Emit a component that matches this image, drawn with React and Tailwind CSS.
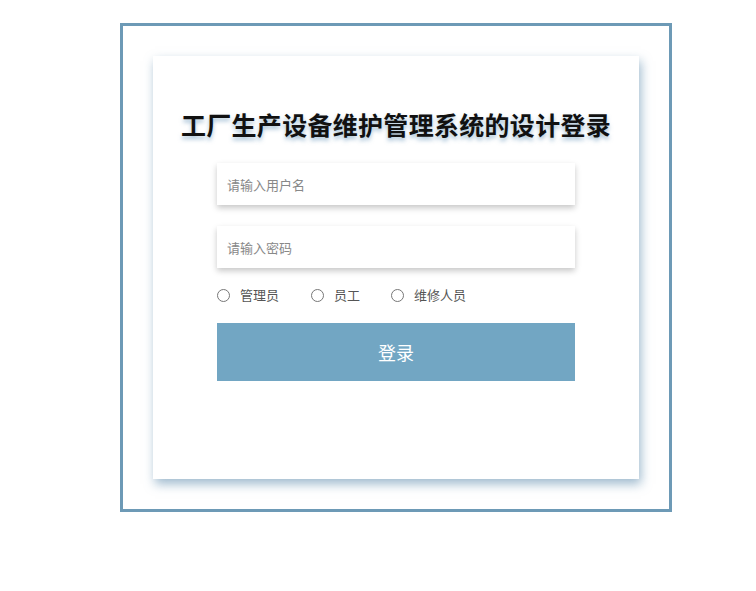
import React, { useState } from 'react';

export default function App() {
    const [role, setRole] = useState(null);
    const roles = ['管理员', '员工', '维修人员'];

    return (
        <div className="w-[756px] h-[591px] bg-white overflow-hidden" style={{ fontFamily: '"Noto Sans CJK SC", "Liberation Sans", sans-serif' }}>
            <div className="ml-[120px] mt-[23px] w-[552px] h-[489px] border-[3px] border-[#6d9ab6] pt-[30px] pl-[30px]">
                <div className="w-[486px] h-[423px] bg-white shadow-[2px_5px_10px_rgba(80,130,165,0.55)] pt-[50px] flex flex-col items-center">
                    <h1 className="text-[25px] leading-[36px] font-bold text-[#111] tracking-[0.3px] [text-shadow:0_3px_4px_rgba(90,140,180,0.55)]">
                        工厂生产设备维护管理系统的设计登录
                    </h1>

                    <div className="w-[358px] mt-[21px] flex flex-col">
                        <input
                            type="text"
                            placeholder="请输入用户名"
                            className="h-[42px] px-[10px] text-[13px] text-[#333] placeholder-[#888] bg-white outline-none shadow-[0_3px_6px_rgba(0,0,0,0.22)]"
                        />
                        <input
                            type="password"
                            placeholder="请输入密码"
                            className="h-[42px] mt-[21px] px-[10px] text-[13px] text-[#333] placeholder-[#888] bg-white outline-none shadow-[0_3px_6px_rgba(0,0,0,0.22)]"
                        />

                        <div className="flex items-center mt-[17px] h-[20px] text-[13px] text-[#555]">
                            {roles.map((r, i) => (
                                <label key={r} className={`flex items-center cursor-pointer ${i === 0 ? '' : i === 1 ? 'ml-[32px]' : 'ml-[31px]'}`}>
                                    <span
                                        onClick={() => setRole(r)}
                                        className="w-[13px] h-[13px] rounded-full border border-[#777] flex items-center justify-center"
                                    >
                                        {role === r && <span className="w-[7px] h-[7px] rounded-full bg-[#333]" />}
                                    </span>
                                    <span className="ml-[10px]" onClick={() => setRole(r)}>{r}</span>
                                </label>
                            ))}
                        </div>

                        <button className="mt-[18px] h-[58px] bg-[#72a6c3] text-white text-[18px]">
                            登录
                        </button>
                    </div>
                </div>
            </div>
        </div>
    );
}
